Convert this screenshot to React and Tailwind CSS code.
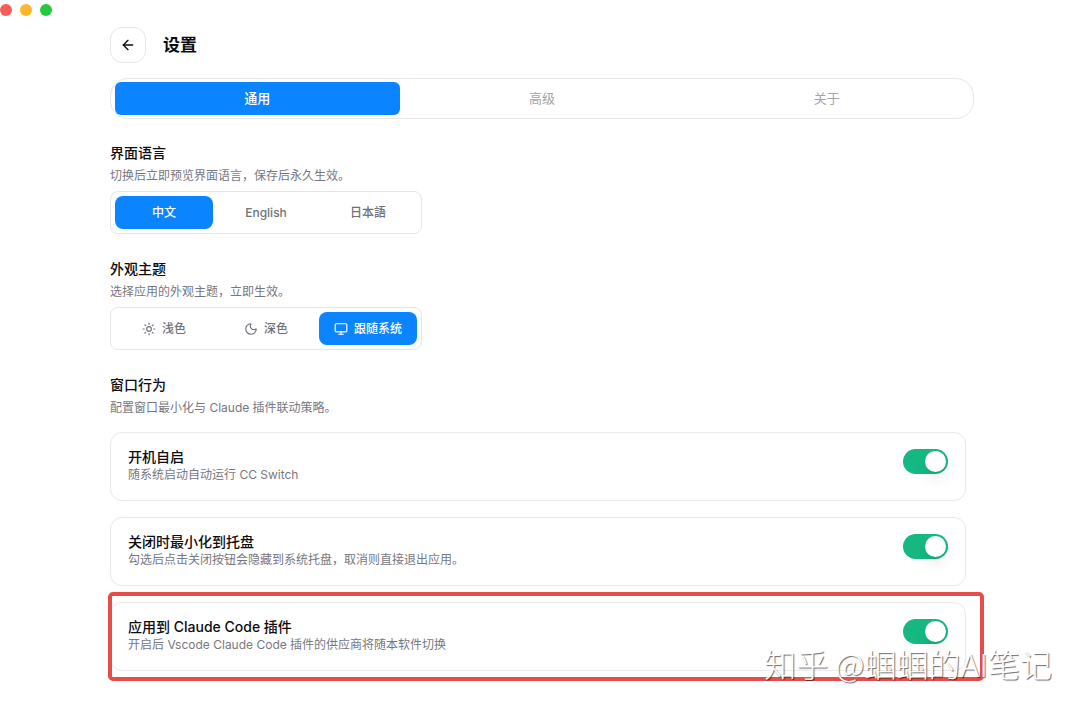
import { useState } from "react";
import { ArrowLeft, Sun, Moon, Monitor } from "lucide-react";

const TABS = ["通用", "高级", "关于"];

const LANGUAGES = [
  { id: "zh", label: "中文" },
  { id: "en", label: "English" },
  { id: "ja", label: "日本語" },
];

const THEMES = [
  { id: "light", label: "浅色", icon: Sun },
  { id: "dark", label: "深色", icon: Moon },
  { id: "system", label: "跟随系统", icon: Monitor },
];

const BEHAVIORS = [
  { id: "autostart", title: "开机自启", hint: "随系统启动自动运行 CC Switch" },
  { id: "tray", title: "关闭时最小化到托盘", hint: "勾选后点击关闭按钮会隐藏到系统托盘，取消则直接退出应用。" },
  { id: "plugin", title: "应用到 Claude Code 插件", hint: "开启后 Vscode Claude Code 插件的供应商将随本软件切换", marked: true },
];

function SectionHeading({ title, hint }) {
  return (
    <header>
      <h2 className="text-sm leading-5 font-medium text-[#0c0c0e]">{title}</h2>
      <p className="mt-1 text-xs leading-[18px] text-[#77777f]">{hint}</p>
    </header>
  );
}

function Segmented({ label, options, value, onChange }) {
  return (
    <div role="group" aria-label={label} className="mt-1.5 inline-flex gap-1 rounded-lg border border-[#e6e6e9] p-1">
      {options.map(({ id, label: text, icon: Icon }) => (
        <button
          key={id}
          type="button"
          aria-pressed={value === id}
          onClick={() => onChange(id)}
          className={`flex h-[33px] w-[98px] items-center justify-center gap-1.5 rounded-lg text-xs font-medium whitespace-nowrap ${
            value === id ? "bg-[#0a84ff] text-white" : "text-[#71717a]"
          }`}
        >
          {Icon && <Icon size={14} strokeWidth={2} aria-hidden="true" />}
          {text}
        </button>
      ))}
    </div>
  );
}

function ToggleCard({ id, title, hint, marked }) {
  const [on, setOn] = useState(true);
  return (
    <li className="relative flex items-start justify-between gap-4 rounded-xl border border-[#e9e9ec] px-[17px] py-4">
      <div>
        <label htmlFor={id} className="block text-sm leading-4 font-medium text-[#0c0c0e]">{title}</label>
        <p id={`${id}-hint`} className="mt-px text-xs leading-[18px] text-[#77777f]">{hint}</p>
      </div>
      <input
        id={id}
        type="checkbox"
        role="switch"
        aria-describedby={`${id}-hint`}
        checked={on}
        onChange={(e) => setOn(e.target.checked)}
        className="h-[25px] w-[45px] shrink-0 appearance-none rounded-full bg-gray-300 p-0.5 before:block before:size-[21px] before:rounded-full before:bg-white before:shadow-lg before:content-[''] checked:bg-[#14b880] checked:before:ml-5"
      />
      {marked && (
        <div className="pointer-events-none absolute -top-[11px] -right-[19px] -bottom-[11px] -left-[3px] rounded-[5px] border-4 border-[#e64c49]" />
      )}
    </li>
  );
}

export default function App() {
  const [tab, setTab] = useState("通用");
  const [language, setLanguage] = useState("zh");
  const [theme, setTheme] = useState("system");

  return (
    <div className="relative min-h-screen bg-white pt-1 font-['Inter','Noto_Sans_CJK_SC',sans-serif]">
      <div className="flex gap-2" aria-hidden="true">
        <span className="size-3 rounded-full bg-[#fc5b57]" />
        <span className="size-3 rounded-full bg-[#fdb62e]" />
        <span className="size-3 rounded-full bg-[#27c840]" />
      </div>

      <main className="mt-[11px] pr-[106px] pb-9 pl-[110px]">
        <div className="flex items-center gap-[17px]">
          <button type="button" aria-label="返回" className="flex size-9 items-center justify-center rounded-xl border border-[#e6e6e9] text-[#0c0c0e]">
            <ArrowLeft size={16} strokeWidth={2} aria-hidden="true" />
          </button>
          <h1 className="text-[17px] leading-6 font-semibold text-[#0c0c0e]">设置</h1>
        </div>

        <div role="tablist" className="mt-[15px] grid grid-cols-3 rounded-[18px] border border-[#e6e6e9] px-1 py-[3px]">
          {TABS.map((name) => (
            <button
              key={name}
              type="button"
              role="tab"
              aria-selected={tab === name}
              onClick={() => setTab(name)}
              className={`h-[33px] rounded-md text-[13px] ${
                tab === name ? "bg-[#0a84ff] font-medium text-white" : "text-[#a3a3a8]"
              }`}
            >
              {name}
            </button>
          ))}
        </div>

        <div className="mt-6 flex flex-col gap-[25px] pr-2">
          <section>
            <SectionHeading title="界面语言" hint="切换后立即预览界面语言，保存后永久生效。" />
            <Segmented label="界面语言" options={LANGUAGES} value={language} onChange={setLanguage} />
          </section>
          <section>
            <SectionHeading title="外观主题" hint="选择应用的外观主题，立即生效。" />
            <Segmented label="外观主题" options={THEMES} value={theme} onChange={setTheme} />
          </section>
          <section>
            <SectionHeading title="窗口行为" hint="配置窗口最小化与 Claude 插件联动策略。" />
            <ul className="mt-[15px] flex flex-col gap-4">
              {BEHAVIORS.map((item) => (
                <ToggleCard key={item.id} {...item} />
              ))}
            </ul>
          </section>
        </div>
      </main>

      <div className="pointer-events-none absolute top-[643px] right-7 font-['Noto_Sans_CJK_SC',sans-serif] text-[32px] leading-10 font-light whitespace-nowrap text-white [text-shadow:1px_1px_1px_rgba(0,0,0,0.6)]">
        知乎 @蝈蝈的AI笔记
      </div>
    </div>
  );
}
